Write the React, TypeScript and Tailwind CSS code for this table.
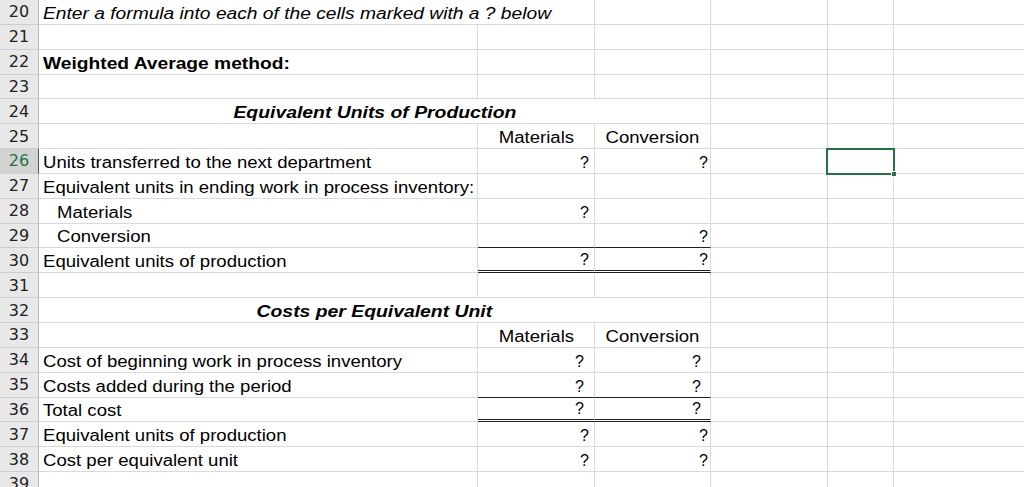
import type { ReactNode } from "react";

type Edge = "grid" | "single" | "double" | "none";

const W = { a: 439, b: 117, c: 116, d: 117, e: 66 };

const edgeClass: Record<Edge, string> = {
    grid: "border-b border-b-[#dadada]",
    single: "border-b border-b-[#1f1f1f]",
    double: "border-b-[3px] border-double border-b-[#1f1f1f]",
    none: "",
};

function Cell({
    w,
    children,
    className = "",
    right = true,
    edge = "grid",
    selected = false,
}: {
    w?: number;
    children?: ReactNode;
    className?: string;
    right?: boolean;
    edge?: Edge;
    selected?: boolean;
}) {
    return (
        <div
            className={`relative flex h-full shrink-0 items-end pb-[1px] ${right ? "border-r border-r-[#dadada]" : ""} ${edgeClass[edge]} ${w ? "" : "grow"} ${className}`}
            style={w ? { width: w } : undefined}
        >
            {children}
            {selected && (
                <div className="pointer-events-none absolute -top-[1px] -left-[2px] -right-[2px] -bottom-[2px] z-10 border-2 border-[#217346]">
                    <div className="absolute -right-[4px] -bottom-[4px] h-[6px] w-[6px] border border-white bg-[#217346]" />
                </div>
            )}
        </div>
    );
}

// the sheet was captured a bit wider than plain Arial, so stretch the words
function Q({ pad }: { pad: string }) {
    return <span className={`ml-auto leading-[18px] ${pad}`}>?</span>;
}

function Head({ children }: { children: ReactNode }) {
    return <span className="mx-auto inline-block origin-center scale-x-[1.16] leading-[18px]">{children}</span>;
}

type RowProps = {
    n: number;
    a?: ReactNode;
    aClass?: string;
    indent?: boolean;
    aRight?: boolean;
    merged?: ReactNode;
    b?: ReactNode;
    c?: ReactNode;
    edge?: Edge;
    active?: boolean;
};

function Row({ n, a, aClass = "scale-x-[1.16]", indent = false, aRight = true, merged, b, c, edge = "grid", active = false }: RowProps) {
    return (
        <div className="flex h-[24.85px] w-full">
            <div
                className={`flex h-full w-[39px] shrink-0 items-center justify-center border-b border-b-[#cdcdcd] pt-[1px] font-['DejaVu_Sans',sans-serif] text-[16px] ${
                    active
                        ? "border-r border-r-[#217346] bg-[#d2d2d2] text-[#217346]"
                        : "border-r border-r-[#b9b9b9] bg-[#e8e8e8] text-[#222]"
                }`}
            >
                {n}
            </div>
            {merged !== undefined ? (
                <Cell w={W.a + W.b + W.c} className="justify-center">
                    <span className="inline-block origin-center scale-x-[1.21] leading-[18px] font-bold italic">{merged}</span>
                </Cell>
            ) : (
                <>
                    <Cell w={W.a} right={aRight} className={`overflow-visible ${indent ? "pl-[18px]" : "pl-[4px]"}`}>
                        <span className={`z-[1] inline-block origin-left leading-[18px] whitespace-nowrap ${aClass}`}>{a}</span>
                    </Cell>
                    <Cell w={W.b} edge={edge}>
                        {b}
                    </Cell>
                    <Cell w={W.c} edge={edge}>
                        {c}
                    </Cell>
                </>
            )}
            <Cell w={W.d} />
            <Cell w={W.e} selected={active} />
            <Cell right={false} />
        </div>
    );
}

const p1 = { b: "pr-[5px]", c: "pr-[2px]" };
const p2 = { b: "pr-[10px]", c: "pr-[9px]" };

export default function App() {
    return (
        <div className="h-[487px] w-[1024px] overflow-hidden bg-white font-['Liberation_Sans',Arial,sans-serif] text-[16px] text-black">
            <Row
                n={20}
                a="Enter a formula into each of the cells marked with a ? below"
                aClass="scale-x-[1.2] italic"
                aRight={false}
            />
            <Row n={21} />
            <Row n={22} a="Weighted Average method:" aClass="scale-x-[1.2] font-bold" />
            <Row n={23} />
            <Row n={24} merged="Equivalent Units of Production" />
            <Row n={25} b={<Head>Materials</Head>} c={<Head>Conversion</Head>} />
            <Row
                n={26}
                active
                a="Units transferred to the next department"
                b={<Q pad={p1.b} />}
                c={<Q pad={p1.c} />}
            />
            <Row n={27} a="Equivalent units in ending work in process inventory:" />
            <Row n={28} a="Materials" indent b={<Q pad={p1.b} />} />
            <Row n={29} a="Conversion" indent c={<Q pad={p1.c} />} edge="single" />
            <Row
                n={30}
                a="Equivalent units of production"
                b={<Q pad={p1.b} />}
                c={<Q pad={p1.c} />}
                edge="double"
            />
            <Row n={31} />
            <Row n={32} merged="Costs per Equivalent Unit" />
            <Row n={33} b={<Head>Materials</Head>} c={<Head>Conversion</Head>} />
            <Row
                n={34}
                a="Cost of beginning work in process inventory"
                b={<Q pad={p2.b} />}
                c={<Q pad={p2.c} />}
            />
            <Row
                n={35}
                a="Costs added during the period"
                b={<Q pad={p2.b} />}
                c={<Q pad={p2.c} />}
                edge="single"
            />
            <Row n={36} a="Total cost" b={<Q pad={p2.b} />} c={<Q pad={p2.c} />} edge="double" />
            <Row
                n={37}
                a="Equivalent units of production"
                b={<Q pad={p1.b} />}
                c={<Q pad={p1.c} />}
            />
            <Row n={38} a="Cost per equivalent unit" b={<Q pad={p1.b} />} c={<Q pad={p1.c} />} />
            <Row n={39} />
        </div>
    );
}
